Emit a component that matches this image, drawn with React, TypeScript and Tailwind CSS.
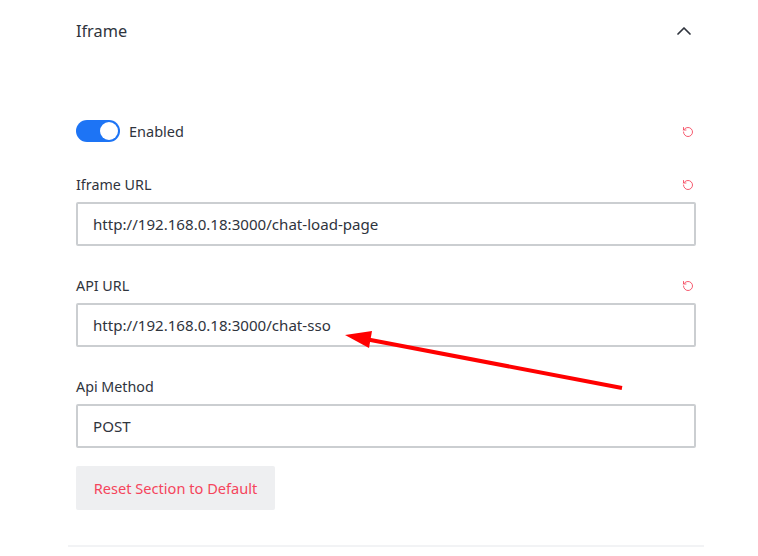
import { ChevronUp, RotateCcw } from "lucide-react";

function ResetIcon() {
  return <RotateCcw size={12} strokeWidth={1.75} className="mt-[1px] text-[#f5455c]" />;
}

function Field({ label, value, reset }: { label: string; value: string; reset?: boolean }) {
  return (
    <div>
      <div className="flex h-[20px] items-center justify-between pr-[2.5px]">
        <span className="mt-[1px] text-[14.3px] text-[#2f343d]">{label}</span>
        {reset && <ResetIcon />}
      </div>
      <div className="mt-[8px] flex h-[44px] items-center rounded-[2px] border-2 border-[#cbced1] px-[15px] text-[15.1px] text-[#2f343d]">
        {value}
      </div>
    </div>
  );
}

export default function App() {
  return (
    <div className="relative h-[556px] w-[758px] overflow-hidden bg-white font-['Noto_Sans',sans-serif]">
      <div className="ml-[68px] mr-[54px] h-[547px] border-b-2 border-[#f2f3f5] pl-[8px] pr-[8px]">
        <div className="flex h-[62px] items-center justify-between">
          <span className="text-[16.3px] text-[#2f343d]">Iframe</span>
          <ChevronUp size={24} strokeWidth={1.75} className="text-[#2f343d]" />
        </div>
        <div className="mt-[58px] flex h-[22px] items-center justify-between pr-[2.5px]">
          <div className="flex items-center gap-[9px]">
            <div className="flex h-[22px] w-[44px] items-center justify-end rounded-full bg-[#1d74f5] pr-[2px]">
              <div className="h-[18px] w-[18px] rounded-full bg-white" />
            </div>
            <span className="mt-[1px] text-[14.5px] text-[#2f343d]">Enabled</span>
          </div>
          <ResetIcon />
        </div>
        <div className="mt-[32px] flex flex-col gap-[29px]">
          <Field label="Iframe URL" value="http://192.168.0.18:3000/chat-load-page" reset />
          <Field label="API URL" value="http://192.168.0.18:3000/chat-sso" reset />
          <Field label="Api Method" value="POST" />
        </div>
        <button className="mt-[18px] flex h-[44px] w-[199px] items-center justify-center rounded-[2px] bg-[#eeeff1] pt-[1px] text-[14.6px] text-[#f5455c]">
          Reset Section to Default
        </button>
      </div>
      <svg className="absolute left-0 top-0" width="758" height="556" fill="none">
        <line x1="622" y1="388" x2="368" y2="339.5" stroke="#ff0000" strokeWidth="4" />
        <polygon points="345,335 372,331 369,348" fill="#ff0000" />
      </svg>
    </div>
  );
}
